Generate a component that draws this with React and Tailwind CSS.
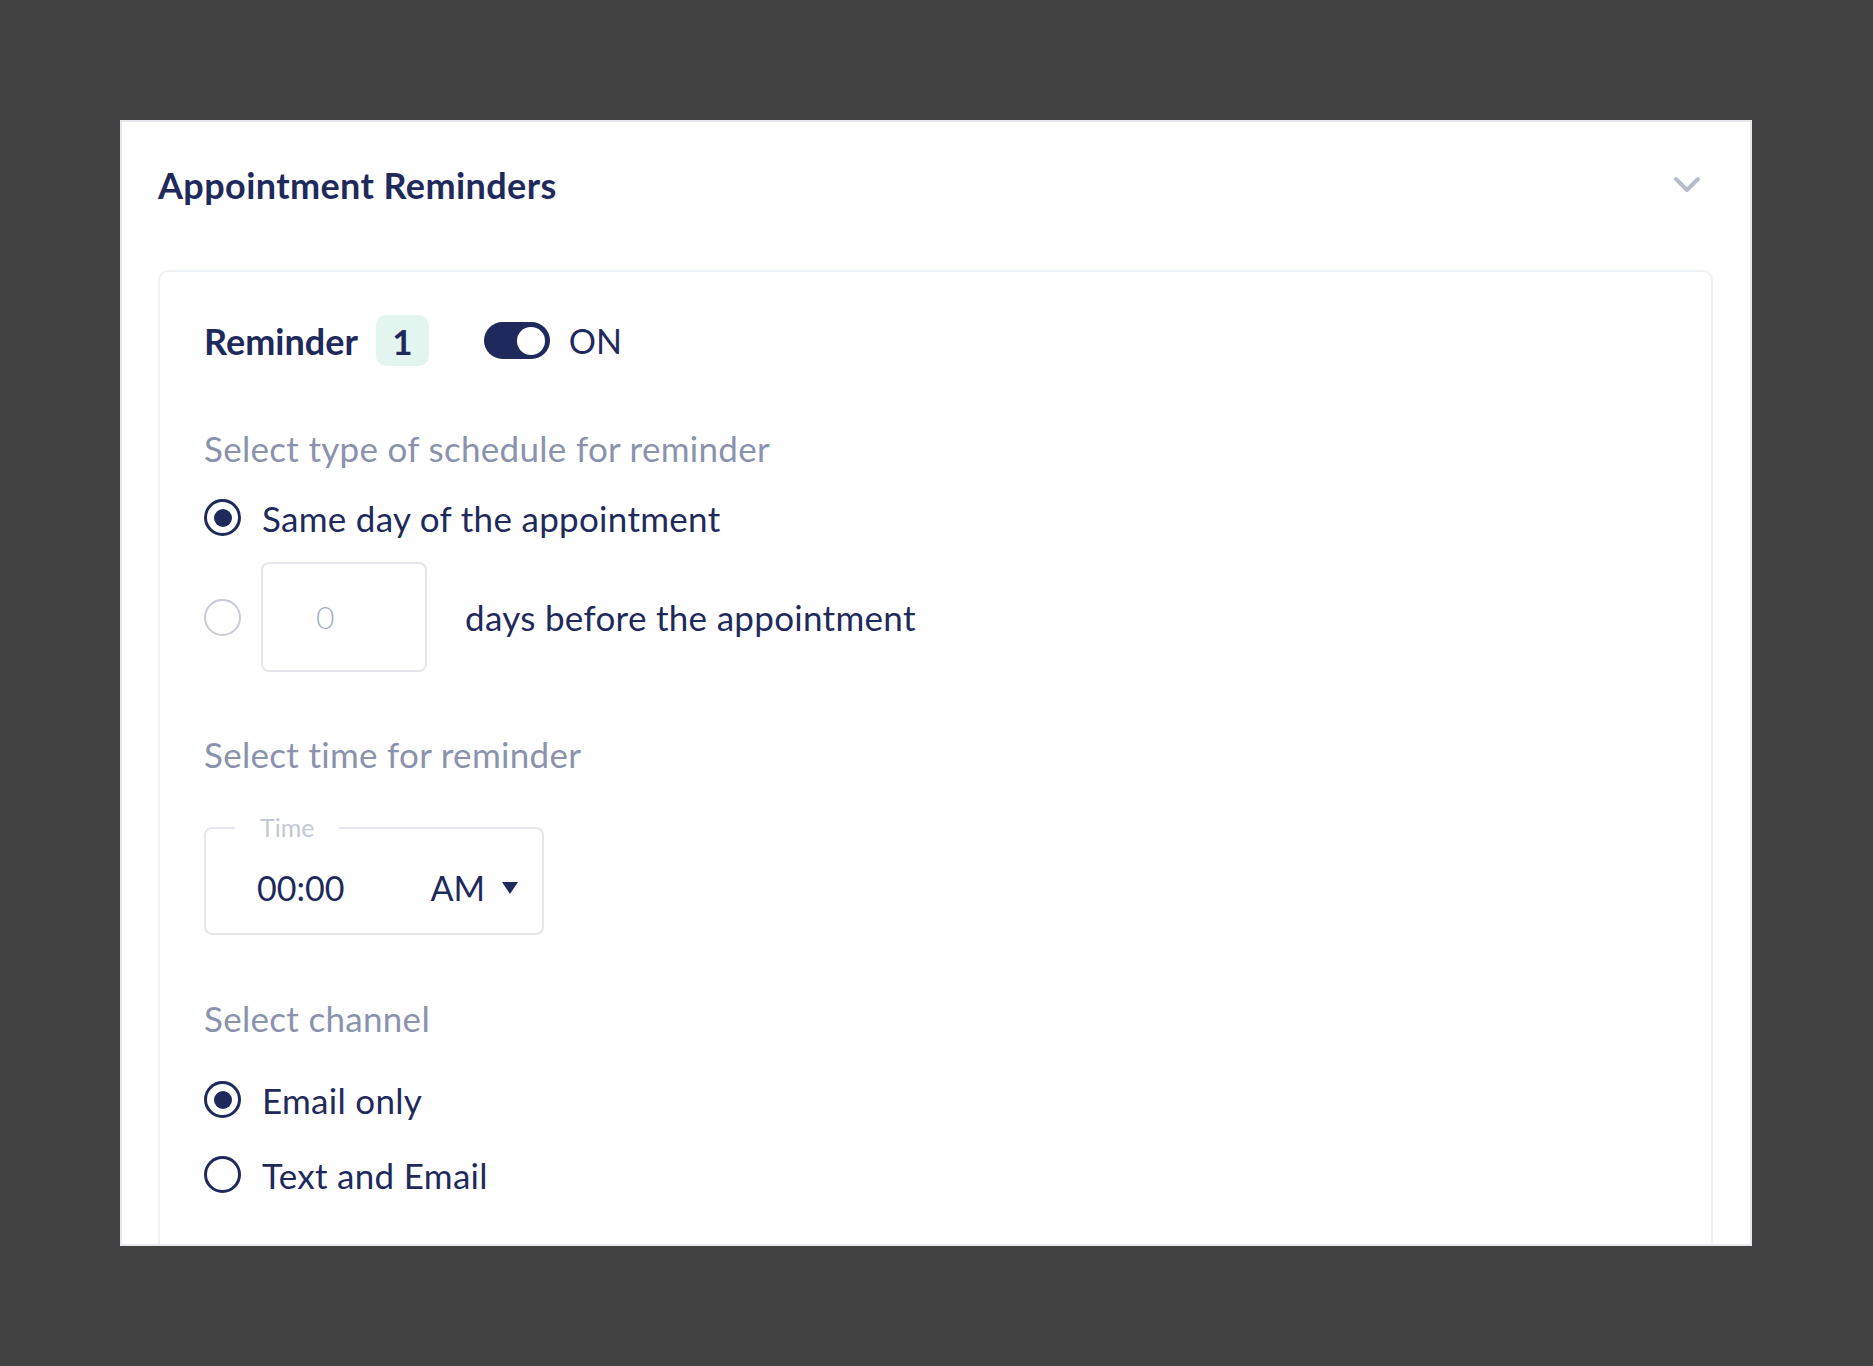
import React from "react";

const navy = "text-[#1f2a5c]";
const body = "text-[35px] leading-[34px] tracking-[0.3px]";

const Radio = ({ checked, muted }) => (
  <span
    className={`flex items-center justify-center w-[37px] h-[37px] shrink-0 rounded-full ${
      checked
        ? "border-[3px] border-[#1f2a5c]"
        : muted
        ? "border-2 border-[#c7cbd5]"
        : "border-[3px] border-[#1f2a5c]"
    }`}
  >
    {checked && <span className="w-[18px] h-[18px] rounded-full bg-[#1f2a5c]" />}
  </span>
);

const SectionLabel = ({ children, className = "" }) => (
  <div className={`${body} text-[#8a92ad] ${className}`}>{children}</div>
);

export default function App() {
  return (
    <div
      className="min-h-screen w-full bg-[#424242] pt-[120px] pl-[120px] pr-[121px]"
      style={{ fontFamily: "Lato, 'Noto Sans', sans-serif" }}
    >
      <div className="h-[1126px] overflow-hidden bg-white border-2 border-[#e6e8ee] pt-[46px] pl-[36px] pr-[37px]">
        {/* Header */}
        <div className="flex items-center justify-between">
          <h2 className={`text-[36px] leading-[34px] tracking-[0.4px] font-bold ${navy}`}>Appointment Reminders</h2>
          <svg width="28" height="18" viewBox="0 0 28 18" className="mr-[12px]">
            <polyline
              points="3,3 14,14 25,3"
              fill="none"
              stroke="#b6bcc8"
              strokeWidth="4"
              strokeLinecap="round"
              strokeLinejoin="round"
            />
          </svg>
        </div>

        {/* Reminder card */}
        <div className="mt-[68px] border-2 border-[#eef1f5] rounded-[10px] pt-[43px] pl-[44px] pb-[120px]">
          <div className="flex items-center h-[51px]">
            <span className={`text-[36px] leading-[34px] font-bold ${navy}`}>Reminder</span>
            <span
              className={`ml-[18px] w-[53px] h-[51px] rounded-[10px] bg-[#e2f5ef] flex items-center justify-center text-[35px] leading-[34px] font-bold ${navy}`}
            >
              1
            </span>
            <span className="ml-[55px] w-[66px] h-[37px] rounded-full bg-[#1f2a5c] flex items-center">
              <span className="ml-auto mr-[5px] w-[28px] h-[28px] rounded-full bg-white" />
            </span>
            <span className={`ml-[19px] text-[34px] leading-[34px] ${navy}`}>ON</span>
          </div>

          <SectionLabel className="mt-[65px]">Select type of schedule for reminder</SectionLabel>

          <div className="mt-[34px] flex items-center gap-[21px] h-[37px]">
            <Radio checked />
            <span className={`${body} ${navy}`}>Same day of the appointment</span>
          </div>

          <div className="mt-[26px] flex items-center">
            <Radio muted />
            <div className="ml-[20px] w-[166px] h-[110px] border-2 border-[#e4e6ec] rounded-[8px] flex items-center pl-[53px] text-[32px] leading-[34px] font-light text-[#aab0c0]">
              0
            </div>
            <span className={`ml-[38px] ${body} ${navy}`}>days before the appointment</span>
          </div>

          <SectionLabel className="mt-[65px]">Select time for reminder</SectionLabel>

          <div className="relative mt-[56px] w-[340px] h-[108px] border-2 border-[#e4e6ec] rounded-[8px] flex items-center pt-[14px] pl-[51px] pr-[24px]">
            <span className="absolute -top-[15px] left-[29px] px-[25px] bg-white text-[25px] leading-[26px] text-[#c3c8d4]">
              Time
            </span>
            <span className={`text-[34px] leading-[34px] ${navy}`}>00:00</span>
            <span className={`ml-auto text-[34px] leading-[34px] ${navy}`}>AM</span>
            <svg width="16" height="12" viewBox="0 0 16 12" className="ml-[17px]">
              <polygon points="0,0 16,0 8,12" fill="#1f2a5c" />
            </svg>
          </div>

          <SectionLabel className="mt-[66px]">Select channel</SectionLabel>

          <div className="mt-[46px] flex items-center gap-[21px] h-[37px]">
            <Radio checked />
            <span className={`${body} ${navy}`}>Email only</span>
          </div>
          <div className="mt-[38px] flex items-center gap-[21px] h-[37px]">
            <Radio />
            <span className={`${body} ${navy}`}>Text and Email</span>
          </div>
        </div>
      </div>
    </div>
  );
}
